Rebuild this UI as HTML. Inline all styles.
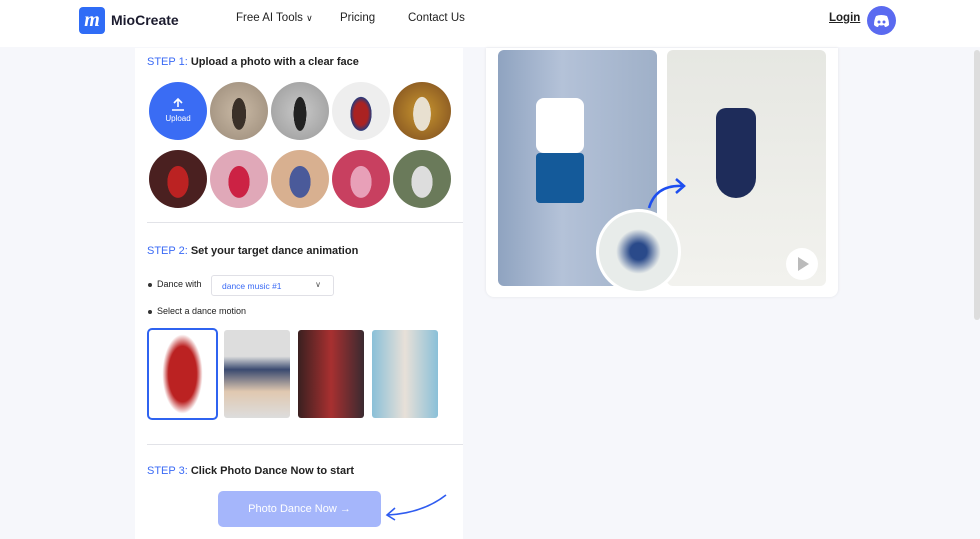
<!DOCTYPE html>
<html><head><meta charset="utf-8"><style>
*{margin:0;padding:0;box-sizing:border-box}
body{width:980px;height:539px;overflow:hidden;background:#f6f7fb;font-family:"Liberation Sans",Arial,sans-serif;position:relative;color:#111}
.nav{position:absolute;left:0;top:0;width:980px;height:47px;background:#fff}
.logo{position:absolute;left:79px;top:7px;width:26px;height:27px;background:#2f6cf6;border-radius:4px;color:#fff;font:italic bold 20px "Liberation Serif",serif;text-align:center;line-height:26px}
.brand{position:absolute;left:111px;top:12px;font-weight:bold;font-size:14px;color:#1b1b2e}
.nl{position:absolute;top:12px;font-size:11.5px;color:#222}
.panel{position:absolute;left:135px;top:48px;width:328px;height:491px;background:#fff}
.st{position:absolute;left:12px;font-size:11px;font-weight:bold;color:#222}
.st b{color:#3a6af5;font-weight:normal}
.c{position:absolute;width:58px;height:58px;border-radius:50%}
.hr{position:absolute;left:12px;width:316px;height:1px;background:#e2e3e8}
.lab{position:absolute;font-size:9px;color:#222}
.dot{position:absolute;width:4px;height:4px;border-radius:50%;background:#333}
.th{position:absolute;top:282px;width:66px;height:88px;border-radius:3px}
.card{position:absolute;left:486px;top:48px;width:352px;height:249px;background:#fff;border-radius:0 0 8px 8px;box-shadow:0 0 3px rgba(0,0,0,.08)}
</style></head><body>
<div class="nav">
<div class="logo">m</div><div class="brand">MioCreate</div>
<div class="nl" style="left:236px">Free AI Tools <span style="font-size:9px">∨</span></div>
<div class="nl" style="left:340px">Pricing</div>
<div class="nl" style="left:408px">Contact Us</div>
<div class="nl" style="left:829px;text-decoration:underline;font-weight:bold;color:#222">Login</div>
<div style="position:absolute;left:867px;top:6px;width:29px;height:29px;border-radius:50%;background:#5a6af0">
<svg width="29" height="29" viewBox="0 0 29 29"><path d="M9 10q5-2 11 0q2 4 2 9q-2 2-4 2l-1-2q-3 1-5 0l-1 2q-2 0-4-2q0-5 2-9z" fill="#fff"/><circle cx="12" cy="16" r="1.5" fill="#5a6af0"/><circle cx="17" cy="16" r="1.5" fill="#5a6af0"/></svg></div>
</div>
<div class="panel">
<div class="st" style="top:8px"><b>STEP 1:</b> Upload a photo with a clear face</div>
<div class="c" style="left:14px;top:34px;background:#3a6cf4;color:#fff;text-align:center">
<svg style="position:absolute;left:22px;top:15px" width="14" height="14" viewBox="0 0 14 14"><path d="M7 10V2M3 6l4-4 4 4M1 13h12" fill="none" stroke="#fff" stroke-width="1.6"/></svg>
<div style="position:absolute;top:32px;width:58px;font-size:8px">Upload</div></div>
<div class="c" style="left:75px;top:34px;background:radial-gradient(ellipse 20% 45% at 50% 55%,#3a3028 60%,transparent 62%),radial-gradient(circle,#c9b9a5,#9a8a78)"></div>
<div class="c" style="left:136px;top:34px;background:radial-gradient(ellipse 18% 48% at 50% 55%,#222 60%,transparent 62%),radial-gradient(circle,#c8c8c8,#999)"></div>
<div class="c" style="left:197px;top:34px;background:radial-gradient(ellipse 30% 48% at 50% 55%,#a22 40%,#2a3a7a 60%,transparent 62%),#eee"></div>
<div class="c" style="left:258px;top:34px;background:radial-gradient(ellipse 25% 48% at 50% 55%,#e8e0d0 60%,transparent 62%),radial-gradient(circle,#c9962e,#7a4a20)"></div>
<div class="c" style="left:14px;top:102px;background:radial-gradient(ellipse 30% 45% at 50% 55%,#b22 60%,transparent 62%),#4a2020"></div>
<div class="c" style="left:75px;top:102px;background:radial-gradient(ellipse 30% 45% at 50% 55%,#c24 60%,transparent 62%),#e0a8b8"></div>
<div class="c" style="left:136px;top:102px;background:radial-gradient(ellipse 30% 45% at 50% 55%,#4a5a9a 60%,transparent 62%),#d8b090"></div>
<div class="c" style="left:197px;top:102px;background:radial-gradient(ellipse 30% 45% at 50% 55%,#e8a0b8 60%,transparent 62%),#c84060"></div>
<div class="c" style="left:258px;top:102px;background:radial-gradient(ellipse 30% 45% at 50% 55%,#ddd 60%,transparent 62%),#6a7a5a"></div>
<div class="hr" style="top:174px"></div>
<div class="st" style="top:197px"><b>STEP 2:</b> Set your target dance animation</div>
<div class="dot" style="left:13px;top:235px"></div><div class="lab" style="left:22px;top:231px">Dance with</div>
<div style="position:absolute;left:76px;top:227px;width:123px;height:21px;border:1px solid #e0e0e6;border-radius:3px;font-size:8.5px;color:#3a6af5;padding:5px 10px">dance music #1<span style="position:absolute;right:12px;top:4px;color:#555;font-size:8px">∨</span></div>
<div class="dot" style="left:13px;top:262px"></div><div class="lab" style="left:22px;top:258px">Select a dance motion</div>
<div class="th" style="left:12px;top:280px;width:71px;height:92px;border:2px solid #2f63f0;border-radius:5px;background:radial-gradient(ellipse 30% 45% at 50% 50%,#b22 70%,#fff 100%)"></div>
<div class="th" style="left:89px;background:linear-gradient(#ddd 30%,#3a4a70 45%,#e0c8b0 70%,#ddd)"></div>
<div class="th" style="left:163px;background:linear-gradient(90deg,#3a2020,#a83030 50%,#3a2a30)"></div>
<div class="th" style="left:237px;background:linear-gradient(90deg,#8ac0d8,#e8e0d8 50%,#8ac0d8)"></div>
<div class="hr" style="top:396px"></div>
<div class="st" style="top:417px"><b>STEP 3:</b> Click Photo Dance Now to start</div>
<div style="position:absolute;left:83px;top:443px;width:163px;height:36px;background:#a5b6fb;border-radius:5px;color:#fff;font-size:11px;text-align:center;line-height:36px">Photo Dance Now →</div>
<svg style="position:absolute;left:248px;top:445px" width="65" height="30"><path d="M63 2Q40 20 5 22M12 15L4 22L12 27" fill="none" stroke="#2f5cf0" stroke-width="1.6"/></svg>
</div>
<div class="card">
<div style="position:absolute;left:12px;top:2px;width:159px;height:236px;border-radius:6px;background:linear-gradient(90deg,#8fa3c0,#b4c2d8 40%,#9fb0c8)"></div>
<div style="position:absolute;left:50px;top:50px;width:48px;height:55px;background:#fff;border-radius:8px"></div>
<div style="position:absolute;left:50px;top:105px;width:48px;height:50px;background:#145a9a;border-radius:4px"></div>
<div style="position:absolute;left:181px;top:2px;width:159px;height:236px;border-radius:6px;background:linear-gradient(#e6e7e2,#f2f2ee)"></div>
<div style="position:absolute;left:230px;top:60px;width:40px;height:90px;background:#1e2c5a;border-radius:10px 10px 20px 20px"></div>
<div style="position:absolute;left:110px;top:161px;width:85px;height:85px;border-radius:50%;border:3px solid #fff;background:radial-gradient(circle,#2a4a8a 15%,#e8ecea 40%)"></div>
<svg style="position:absolute;left:160px;top:128px" width="45" height="35"><path d="M3 32Q10 8 38 10M30 3L38 10L30 17" fill="none" stroke="#1d4ef0" stroke-width="2.5"/></svg>
<div style="position:absolute;left:300px;top:200px;width:32px;height:32px;border-radius:50%;background:#fff"><div style="position:absolute;left:12px;top:9px;border-left:11px solid #bbb;border-top:7px solid transparent;border-bottom:7px solid transparent"></div></div>
</div>
<div style="position:absolute;left:974px;top:50px;width:6px;height:270px;background:#ddd;border-radius:3px"></div>
</body></html>
